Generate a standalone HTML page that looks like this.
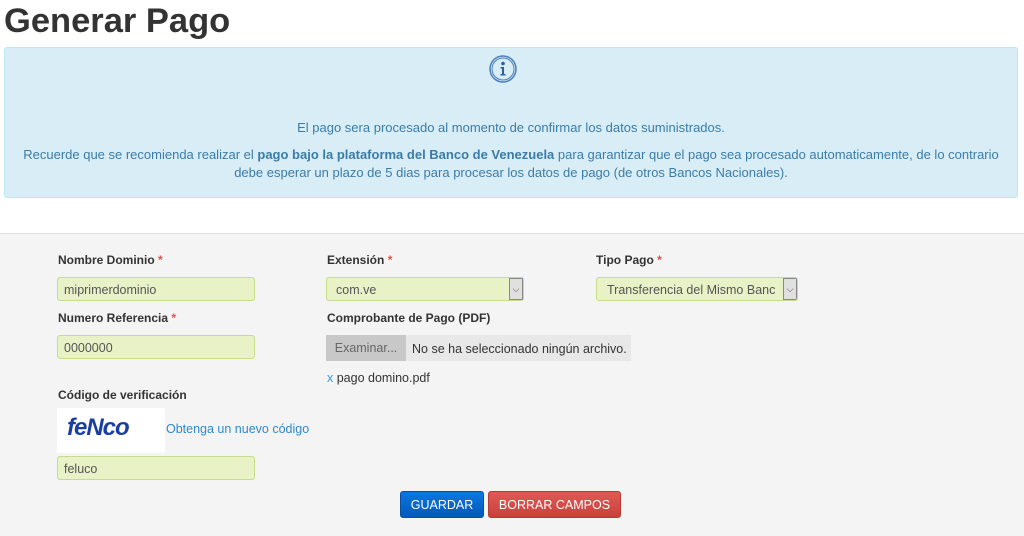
<!DOCTYPE html><html><head><style>
body{margin:0;width:1024px;height:535px;overflow:hidden;background:#fff;font-family:"Liberation Sans",sans-serif;font-size:12px;color:#333;position:relative}
.a{position:absolute}
h1{position:absolute;left:4px;top:0;margin:0;font-size:34.5px;font-weight:bold;color:#333;line-height:42px}
.info{left:4px;top:47px;width:1012px;height:149px;background:#d9edf7;border:1px solid #bce8f1;border-radius:3px;color:#3a7ca8;text-align:center;font-size:13px}
.form{left:0;top:233px;width:1024px;height:302px;background:#f4f4f4;border-top:1px solid #e0e0e0}
.lbl{font-weight:bold;font-size:12px;color:#333}
.lbl span{color:#d9534f}
.in{background:#e8f2c6;border:1px solid #c5dc8a;border-radius:3px;height:24px;box-sizing:border-box;padding:0 6px;line-height:24px;font-size:12.5px;color:#555}
.arr{position:absolute;right:0;top:0;width:14px;height:22px;background:#e0e0e0;border:1px solid #888;box-sizing:border-box;font-size:9px;text-align:center;line-height:20px;color:#444}
.btn{top:491px;height:27px;border-radius:3px;color:#fff;text-align:center;line-height:27px;font-size:12.5px}
</style></head><body>
<h1>Generar Pago</h1>
<div class="a info">
<svg class="a" style="left:483px;top:6px" width="30" height="30" viewBox="0 0 30 30"><circle cx="15" cy="15" r="13" fill="none" stroke="#4a7ebb" stroke-width="1.5"/><circle cx="15" cy="15" r="11" fill="none" stroke="#4a7ebb" stroke-width="1"/><circle cx="15" cy="9.5" r="1.8" fill="#2b5fa8"/><path d="M12.5 13h3.5v7h1.5v1.5h-5v-1.5h1.5v-5.5h-1.5z" fill="#2b5fa8"/></svg>
<div class="a" style="left:0;right:0;top:72px">El pago sera procesado al momento de confirmar los datos suministrados.</div>
<div class="a" style="left:10px;right:10px;top:98px;line-height:18px">Recuerde que se recomienda realizar el <b>pago bajo la plataforma del Banco de Venezuela</b> para garantizar que el pago sea procesado automaticamente, de lo contrario debe esperar un plazo de 5 dias para procesar los datos de pago (de otros Bancos Nacionales).</div>
</div>
<div class="a form"></div>
<div class="a lbl" style="left:58px;top:253px">Nombre Dominio <span>*</span></div>
<div class="a in" style="left:57px;top:277px;width:198px">miprimerdominio</div>
<div class="a lbl" style="left:327px;top:253px">Extensión <span>*</span></div>
<div class="a in" style="left:326px;top:277px;width:198px;padding-left:9px">com.ve<div class="arr">⌵</div></div>
<div class="a lbl" style="left:596px;top:253px">Tipo Pago <span>*</span></div>
<div class="a in" style="left:596px;top:277px;width:202px;padding-left:10px;overflow:hidden;white-space:nowrap">Transferencia del Mismo Banc<div class="arr">⌵</div></div>
<div class="a lbl" style="left:58px;top:311px">Numero Referencia <span>*</span></div>
<div class="a in" style="left:57px;top:335px;width:198px">0000000</div>
<div class="a lbl" style="left:327px;top:311px">Comprobante de Pago (PDF)</div>
<div class="a" style="left:326px;top:335px;width:305px;height:26px;background:#e8e8e8"></div>
<div class="a" style="left:326px;top:335px;width:80px;height:26px;background:#c8c8c8;color:#666;line-height:26px;text-align:center;font-size:12.5px">Examinar...</div>
<div class="a" style="left:412px;top:342px;font-size:12.5px">No se ha seleccionado ningún archivo.</div>
<div class="a" style="left:327px;top:371px;font-size:12.5px"><span style="color:#3a9ad9">x</span> pago domino.pdf</div>
<div class="a lbl" style="left:58px;top:388px">Código de verificación</div>
<div class="a" style="left:57px;top:408px;width:108px;height:45px;background:#fff"></div>
<div class="a" style="left:67px;top:414px;font:italic bold 24px 'Liberation Sans',sans-serif;color:#1a3fa0;letter-spacing:-1px">feNco</div>
<div class="a" style="left:166px;top:422px;color:#2a8bd0;font-size:12.5px">Obtenga un nuevo código</div>
<div class="a in" style="left:57px;top:456px;width:198px">feluco</div>
<div class="a btn" style="left:400px;width:84px;background:linear-gradient(#0a78e0,#0558b8);border:1px solid #0a4fa0;box-sizing:border-box">GUARDAR</div>
<div class="a btn" style="left:488px;width:133px;background:linear-gradient(#e05a55,#c9403b);border:1px solid #b83a35;box-sizing:border-box">BORRAR CAMPOS</div>
</body></html>
